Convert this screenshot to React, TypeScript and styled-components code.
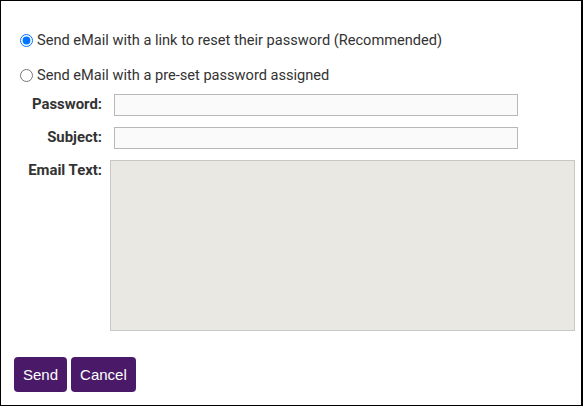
import React from "react";
import styled, { createGlobalStyle } from "styled-components";

const Global = createGlobalStyle`
  html, body { margin: 0; padding: 0; background: #fff; }
  body { font-family: Roboto, "Liberation Sans", sans-serif; }
  * { box-sizing: border-box; }
`;

const Frame = styled.div`
  width: 583px;
  height: 406px;
  border: 1px solid #000;
  border-right-width: 2px;
  background: #fff;
  padding: 29px 0 0 13px;
  display: flex;
  flex-direction: column;
`;

const RadioRow = styled.label`
  display: flex;
  align-items: center;
  height: 20px;
  font-size: 14.6px;
  color: #333;
  margin-bottom: ${(p: { $gap: number }) => p.$gap}px;
  input {
    margin: 0 4px 0 6px;
    width: 13px;
    height: 13px;
  }
`;

const Form = styled.div`
  display: grid;
  grid-template-columns: 88px 1fr;
  column-gap: 12px;
  row-gap: 11px;
  padding-right: 6px;
`;

const Label = styled.div`
  font-weight: bold;
  font-size: 14.9px;
  color: #333;
  text-align: right;
  line-height: 21px;
`;

const TextInput = styled.input`
  width: 404px;
  height: 22px;
  border: 1px solid #b8b8b8;
  background: #fafafa;
  font-family: inherit;
  font-size: 14px;
  padding: 0 4px;
`;

const TextArea = styled.textarea`
  margin-left: -4px;
  width: 465px;
  height: 171px;
  border: 1px solid #c8c8c4;
  background: #e9e8e2;
  resize: none;
  font-family: inherit;
`;

const Buttons = styled.div`
  display: flex;
  gap: 4px;
  margin-top: 22px;
`;

const Button = styled.button`
  height: 35px;
  padding: 0 9px;
  border: none;
  border-radius: 4px;
  background: #4a1a68;
  color: #fff;
  font-family: "Liberation Sans", Arial, sans-serif;
  font-size: 15px;
  cursor: pointer;
`;

export default function App() {
  return (
    <>
      <Global />
      <Frame>
        <RadioRow $gap={15}>
          <input type="radio" name="mode" defaultChecked />
          Send eMail with a link to reset their password (Recommended)
        </RadioRow>
        <RadioRow $gap={9}>
          <input type="radio" name="mode" />
          Send eMail with a pre-set password assigned
        </RadioRow>
        <Form>
          <Label>Password:</Label>
          <div><TextInput type="text" /></div>
          <Label>Subject:</Label>
          <div><TextInput type="text" /></div>
          <Label>Email Text:</Label>
          <div><TextArea /></div>
        </Form>
        <Buttons>
          <Button>Send</Button>
          <Button>Cancel</Button>
        </Buttons>
      </Frame>
    </>
  );
}
